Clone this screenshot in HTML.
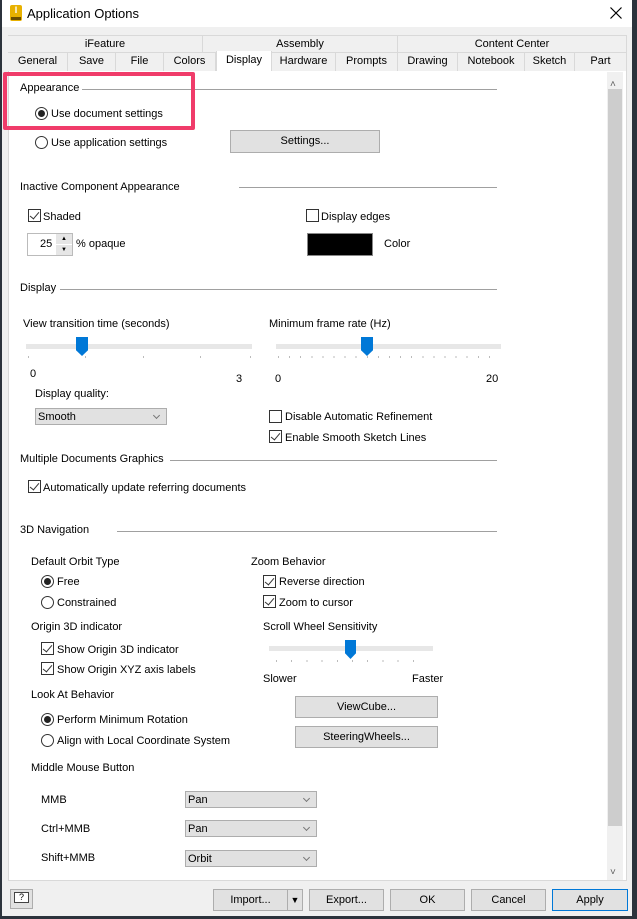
<!DOCTYPE html>
<html><head><meta charset="utf-8"><style>
*{margin:0;padding:0;box-sizing:border-box}
body{width:637px;height:919px;overflow:hidden;background:#2c333c;font-family:"Liberation Sans",sans-serif;font-size:11px;color:#000;position:relative}
.win{position:absolute;left:2px;top:0;width:630px;height:916px;background:#f0f0f0}
.a{position:absolute}
.t{position:absolute;line-height:14px;white-space:nowrap;margin-top:1px}
.ln{position:absolute;height:1px;background:#a0a0a0}
.cb{position:absolute;width:13px;height:13px;border:1px solid #333;background:#fff}
.cb.c::after{content:"";position:absolute;left:3px;top:0px;width:4px;height:8px;border:solid #333;border-width:0 1px 1px 0;transform:rotate(40deg)}
.rb{position:absolute;width:13px;height:13px;border:1px solid #333;border-radius:50%;background:#fff}
.rb.c::after{content:"";position:absolute;left:2px;top:2px;width:7px;height:7px;border-radius:50%;background:#222}
.btn{position:absolute;background:#e1e1e1;border:1px solid #adadad;text-align:center;line-height:20px}
.sel{position:absolute;background:#e1e1e1;border:1px solid #adadad;padding-left:2px;line-height:16px}
.sel::after{content:"";position:absolute;right:7px;top:4px;width:4px;height:4px;border:solid #777;border-width:0 1px 1px 0;transform:rotate(45deg)}
.tr{position:absolute;height:5px;background:#e7e7e7}
.th{position:absolute;width:12px;height:19px;background:#0078d7;clip-path:polygon(0 0,100% 0,100% 70%,50% 100%,0 70%)}
.tk{position:absolute;width:1px;height:2px;background:#bbb}
.tab{position:absolute;border-right:1px solid #d9d9d9;text-align:center;line-height:17px;background:#f0f0f0}
</style></head><body>
<div class="win">
<div class="a" style="left:0;top:0;width:630px;height:27px;background:#fff"></div>
<div class="a" style="left:8px;top:5px;width:12px;height:16px;background:#e8b100;border-radius:2px"></div>
<div class="a" style="left:8px;top:5px;width:12px;height:11px;color:#fff;font-size:9px;font-weight:bold;text-align:center;line-height:11px">I</div>
<div class="a" style="left:9px;top:17px;width:10px;height:3px;background:#6b4e00"></div>
<div class="t" style="left:25px;top:5px;font-size:13px;line-height:16px">Application Options</div>
<svg class="a" style="left:608px;top:7px" width="12" height="12"><path d="M0.5 0.5L11.5 11.5M11.5 0.5L0.5 11.5" stroke="#000" stroke-width="1.2"/></svg>
<div class="a" style="left:6px;top:35px;width:619px;height:37px;border:1px solid #d9d9d9;background:#f0f0f0"></div>
<div class="tab" style="left:6px;top:36px;width:195px;height:17px;border-bottom:1px solid #d9d9d9">iFeature</div>
<div class="tab" style="left:201px;top:36px;width:195px;height:17px;border-bottom:1px solid #d9d9d9">Assembly</div>
<div class="tab" style="left:396px;top:36px;width:228px;height:17px;border-bottom:1px solid #d9d9d9;border-right:none">Content Center</div>
<div class="tab" style="left:6px;top:53px;width:60px;height:18px">General</div>
<div class="tab" style="left:66px;top:53px;width:48px;height:18px">Save</div>
<div class="tab" style="left:114px;top:53px;width:48px;height:18px">File</div>
<div class="tab" style="left:162px;top:53px;width:52px;height:18px">Colors</div>
<div class="tab" style="left:214px;top:51px;width:56px;height:21px;background:#fff;border-left:1px solid #d9d9d9;line-height:18px">Display</div>
<div class="tab" style="left:270px;top:53px;width:64px;height:18px">Hardware</div>
<div class="tab" style="left:334px;top:53px;width:62px;height:18px">Prompts</div>
<div class="tab" style="left:396px;top:53px;width:60px;height:18px">Drawing</div>
<div class="tab" style="left:456px;top:53px;width:67px;height:18px">Notebook</div>
<div class="tab" style="left:523px;top:53px;width:50px;height:18px">Sketch</div>
<div class="tab" style="left:573px;top:53px;width:51px;height:18px;border-right:none">Part</div>
<div class="a" style="left:6px;top:71px;width:619px;height:810px;background:#fff;border:1px solid #d9d9d9;border-top:none"></div>
<div class="a" style="left:605px;top:72px;width:16px;height:808px;background:#f0f0f0"></div>
<div class="a" style="left:606px;top:89px;width:14px;height:737px;background:#cdcdcd"></div>
<div class="t" style="left:608px;top:77px;font-size:10px;color:#606060">˄</div>
<div class="t" style="left:608px;top:865px;font-size:10px;color:#606060">˅</div>
</div>
<div class="t" style="left:20px;top:80px">Appearance</div>
<div class="ln" style="left:82px;top:89px;width:415px"></div>
<div class="rb c" style="left:35px;top:107px"></div>
<div class="t" style="left:51px;top:106px">Use document settings</div>
<div class="a" style="left:3px;top:72px;width:192px;height:58px;border:4px solid #f03c6a;border-radius:2px"></div>
<div class="rb" style="left:35px;top:136px"></div>
<div class="t" style="left:51px;top:135px">Use application settings</div>
<div class="btn" style="left:230px;top:130px;width:150px;height:23px">Settings...</div>

<div class="t" style="left:20px;top:179px">Inactive Component Appearance</div>
<div class="ln" style="left:239px;top:187px;width:258px"></div>
<div class="cb c" style="left:28px;top:209px"></div>
<div class="t" style="left:43px;top:209px">Shaded</div>
<div class="a" style="left:27px;top:233px;width:46px;height:23px;border:1px solid #bbb;background:#fff"></div>
<div class="t" style="left:40px;top:236px">25</div>
<div class="a" style="left:56px;top:234px;width:16px;height:10px;background:#e6e6e6;font-size:6px;text-align:center;line-height:10px">▲</div>
<div class="a" style="left:56px;top:245px;width:16px;height:10px;background:#e6e6e6;font-size:6px;text-align:center;line-height:10px">▼</div>
<div class="t" style="left:76px;top:236px">% opaque</div>
<div class="cb" style="left:306px;top:209px"></div>
<div class="t" style="left:321px;top:209px">Display edges</div>
<div class="a" style="left:307px;top:233px;width:66px;height:23px;background:#000;border:1px solid #888"></div>
<div class="t" style="left:384px;top:236px">Color</div>

<div class="t" style="left:20px;top:280px">Display</div>
<div class="ln" style="left:60px;top:289px;width:437px"></div>
<div class="t" style="left:23px;top:316px">View transition time (seconds)</div>
<div class="tr" style="left:26px;top:344px;width:226px"></div>
<div class="th" style="left:76px;top:337px"></div>
<div class="tk" style="left:28px;top:356px"></div><div class="tk" style="left:85px;top:356px"></div><div class="tk" style="left:143px;top:356px"></div><div class="tk" style="left:200px;top:356px"></div><div class="tk" style="left:250px;top:356px"></div>
<div class="t" style="left:30px;top:366px">0</div>
<div class="t" style="left:236px;top:371px">3</div>
<div class="t" style="left:269px;top:316px">Minimum frame rate (Hz)</div>
<div class="tr" style="left:276px;top:344px;width:225px"></div>
<div class="th" style="left:361px;top:337px"></div>
<div class="a" style="left:278px;top:356px;width:222px;height:2px;background:repeating-linear-gradient(90deg,#bbb 0 1px,transparent 1px 11.1px)"></div>
<div class="t" style="left:275px;top:371px">0</div>
<div class="t" style="left:486px;top:371px">20</div>
<div class="t" style="left:35px;top:386px">Display quality:</div>
<div class="sel" style="left:35px;top:408px;width:132px;height:17px">Smooth</div>
<div class="cb" style="left:269px;top:410px"></div>
<div class="t" style="left:285px;top:409px">Disable Automatic Refinement</div>
<div class="cb c" style="left:269px;top:430px"></div>
<div class="t" style="left:285px;top:430px">Enable Smooth Sketch Lines</div>

<div class="t" style="left:20px;top:451px">Multiple Documents Graphics</div>
<div class="ln" style="left:170px;top:460px;width:327px"></div>
<div class="cb c" style="left:28px;top:480px"></div>
<div class="t" style="left:43px;top:480px">Automatically update referring documents</div>

<div class="t" style="left:20px;top:522px">3D Navigation</div>
<div class="ln" style="left:117px;top:531px;width:380px"></div>
<div class="t" style="left:31px;top:554px">Default Orbit Type</div>
<div class="rb c" style="left:41px;top:575px"></div>
<div class="t" style="left:57px;top:574px">Free</div>
<div class="rb" style="left:41px;top:596px"></div>
<div class="t" style="left:57px;top:595px">Constrained</div>
<div class="t" style="left:31px;top:619px">Origin 3D indicator</div>
<div class="cb c" style="left:41px;top:642px"></div>
<div class="t" style="left:57px;top:642px">Show Origin 3D indicator</div>
<div class="cb c" style="left:41px;top:662px"></div>
<div class="t" style="left:57px;top:662px">Show Origin XYZ axis labels</div>
<div class="t" style="left:31px;top:687px">Look At Behavior</div>
<div class="rb c" style="left:41px;top:713px"></div>
<div class="t" style="left:57px;top:712px">Perform Minimum Rotation</div>
<div class="rb" style="left:41px;top:734px"></div>
<div class="t" style="left:57px;top:733px">Align with Local Coordinate System</div>
<div class="t" style="left:31px;top:760px">Middle Mouse Button</div>
<div class="t" style="left:41px;top:792px">MMB</div>
<div class="sel" style="left:185px;top:791px;width:132px;height:17px">Pan</div>
<div class="t" style="left:41px;top:821px">Ctrl+MMB</div>
<div class="sel" style="left:185px;top:820px;width:132px;height:17px">Pan</div>
<div class="t" style="left:41px;top:850px">Shift+MMB</div>
<div class="sel" style="left:185px;top:850px;width:132px;height:17px">Orbit</div>

<div class="t" style="left:251px;top:554px">Zoom Behavior</div>
<div class="cb c" style="left:263px;top:575px"></div>
<div class="t" style="left:279px;top:574px">Reverse direction</div>
<div class="cb c" style="left:263px;top:595px"></div>
<div class="t" style="left:279px;top:595px">Zoom to cursor</div>
<div class="t" style="left:263px;top:619px">Scroll Wheel Sensitivity</div>
<div class="tr" style="left:269px;top:646px;width:164px"></div>
<div class="th" style="left:345px;top:640px;width:11px;height:19px"></div>
<div class="a" style="left:276px;top:660px;width:152px;height:2px;background:repeating-linear-gradient(90deg,#bbb 0 1px,transparent 1px 15.2px)"></div>
<div class="t" style="left:263px;top:671px">Slower</div>
<div class="t" style="left:412px;top:671px">Faster</div>
<div class="btn" style="left:295px;top:696px;width:143px;height:22px">ViewCube...</div>
<div class="btn" style="left:295px;top:726px;width:143px;height:22px">SteeringWheels...</div>

<div class="a" style="left:10px;top:889px;width:23px;height:20px;border:1px solid #adadad;background:#e1e1e1"></div>
<div class="a" style="left:14px;top:892px;width:15px;height:11px;border:1px solid #444;background:#fff;font-size:9px;line-height:9px;text-align:center">?</div>
<div class="btn" style="left:213px;top:889px;width:75px;height:22px">Import...</div>
<div class="btn" style="left:287px;top:889px;width:16px;height:22px;font-size:9px">▼</div>
<div class="btn" style="left:309px;top:889px;width:75px;height:22px">Export...</div>
<div class="btn" style="left:390px;top:889px;width:75px;height:22px">OK</div>
<div class="btn" style="left:471px;top:889px;width:75px;height:22px">Cancel</div>
<div class="btn" style="left:552px;top:889px;width:76px;height:22px;border:1px solid #0078d7;line-height:20px">Apply</div>
</body></html>
